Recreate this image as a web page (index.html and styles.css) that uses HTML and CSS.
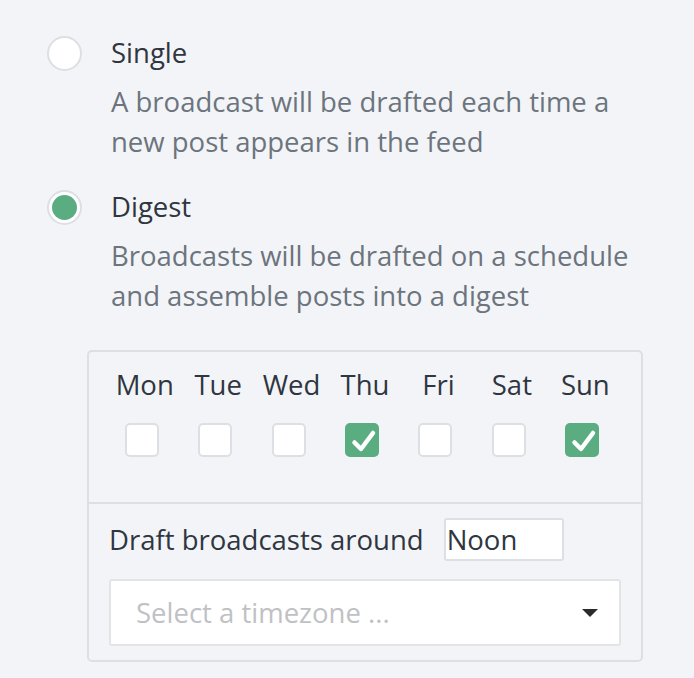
FILE: index.html
```html
<!DOCTYPE html>
<html lang="en">
<head>
  <meta charset="UTF-8">
  <title>Broadcast schedule</title>
  <meta name="viewport" content="width=device-width, initial-scale=1.0">
  <link rel="stylesheet" href="styles.css">
</head>
<body>

  <div class="mode-list">
    <label class="mode">
      <span class="radio"></span>
      <span class="mode-text">
        <span class="mode-title">Single</span>
        <span class="mode-desc">A broadcast will be drafted each time a new post appears in the feed</span>
      </span>
    </label>

    <label class="mode">
      <span class="radio checked"></span>
      <span class="mode-text">
        <span class="mode-title">Digest</span>
        <span class="mode-desc">Broadcasts will be drafted on a schedule and assemble posts into a digest</span>
      </span>
    </label>
  </div>

  <div class="schedule">
    <div class="days">
      <div class="day"><span>Mon</span><span class="box"></span></div>
      <div class="day"><span>Tue</span><span class="box"></span></div>
      <div class="day"><span>Wed</span><span class="box"></span></div>
      <div class="day"><span>Thu</span><span class="box on"><svg viewBox="0 0 34 34"><path d="M9.5 19.5l6.5 6.5 12-16" /></svg></span></div>
      <div class="day"><span>Fri</span><span class="box"></span></div>
      <div class="day"><span>Sat</span><span class="box"></span></div>
      <div class="day"><span>Sun</span><span class="box on"><svg viewBox="0 0 34 34"><path d="M9.5 19.5l6.5 6.5 12-16" /></svg></span></div>
    </div>

    <div class="timing">
      <div class="around">
        Draft broadcasts around
        <span class="time-input">Noon</span>
      </div>
      <div class="tz-select">
        <span class="placeholder">Select a timezone ...</span>
        <span class="caret"></span>
      </div>
    </div>
  </div>

</body>
</html>
```

FILE: styles.css
```css
:root {
  --bg: #f3f4f8;
  --text: #2f3640;
  --muted: #6c747d;
  --line: #dcdfe3;
  --green: #5aad80;
}

body {
  margin: 0;
  background: var(--bg);
  color: var(--text);
  font-family: 'Open Sans', sans-serif;
  font-size: 27.5px;
  line-height: 40px;
  padding: 33px 0 0 47px;
}

.mode {
  display: flex;
  align-items: flex-start;
  margin-bottom: 25px;
}

.radio {
  width: 35px;
  height: 35px;
  box-sizing: border-box;
  border: 2px solid var(--line);
  border-radius: 50%;
  background: #fff;
  margin-top: 3px;
  margin-right: 29px;
  flex-shrink: 0;
  display: flex;
  align-items: center;
  justify-content: center;
}

.radio.checked::after {
  content: "";
  width: 25px;
  height: 25px;
  border-radius: 50%;
  background: var(--green);
}

.mode-text {
  display: flex;
  flex-direction: column;
  width: 530px;
}

.mode-title {
  margin-bottom: 9px;
}

.mode-desc {
  color: var(--muted);
}

/* margin collapses with the last .mode above */
.schedule {
  margin: 34px 0 0 40px;
  width: 556px;
  box-sizing: border-box;
  border: 2px solid #dedfe1;
  border-radius: 5px;
}

.days {
  display: grid;
  grid-template-columns: repeat(7, 1fr);
  padding: 13px 19px 45px;
  border-bottom: 2px solid #dedfe1;
}

.day {
  display: flex;
  flex-direction: column;
  align-items: center;
  gap: 18px;
}

.box {
  width: 34px;
  height: 34px;
  box-sizing: border-box;
  border: 2px solid var(--line);
  border-radius: 5px;
  background: #fff;
  margin-right: 6px;
  position: relative;
}

.box.on {
  background: var(--green);
  border-color: var(--green);
}

.box svg {
  position: absolute;
  inset: -2px;
  width: 34px;
  height: 34px;
  fill: none;
  stroke: #fff;
  stroke-width: 4.5;
  stroke-linecap: round;
  stroke-linejoin: round;
}

.timing {
  padding: 14px 20px 14px;
}

.around {
  display: flex;
  align-items: center;
  gap: 20px;
}

.time-input {
  width: 120px;
  height: 43px;
  box-sizing: border-box;
  border: 2px solid var(--line);
  border-radius: 3px;
  background: #fff;
  padding-left: 1px;
  line-height: 39px;
}

.tz-select {
  margin-top: 18px;
  height: 67px;
  box-sizing: border-box;
  border: 2px solid #e3e4e6;
  border-radius: 3px;
  background: #fff;
  display: flex;
  align-items: center;
  justify-content: space-between;
  padding: 0 21px 0 25px;
}

.placeholder {
  color: #bfc1c4;
}

.caret {
  width: 0;
  height: 0;
  border-left: 8px solid transparent;
  border-right: 8px solid transparent;
  border-top: 8px solid #2b2b2b;
}
```
